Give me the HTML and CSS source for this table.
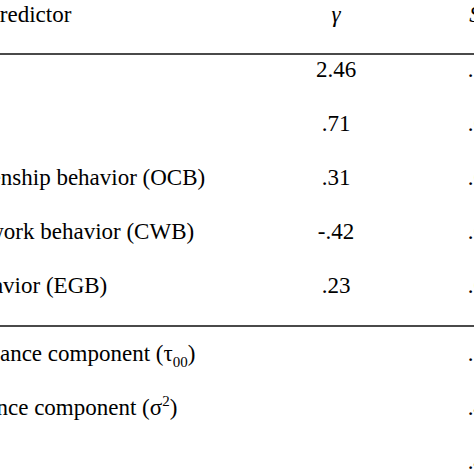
FILE: index.html
```html
<!DOCTYPE html>
<html lang="en">
<head>
	<meta charset="UTF-8">
	<meta name="viewport" content="width=device-width, initial-scale=1.0">
	<title>Multilevel model</title>
	<link rel="stylesheet" href="styles.css">
</head>
<body>
	<div class="wrap">
		<table class="tbl">
			<colgroup>
				<col class="col-name">
				<col class="col-num">
				<col class="col-se">
			</colgroup>
			<thead>
				<tr>
					<th class="cell-name"><span class="head-name">Predictor</span></th>
					<th class="cell-num"><i>γ</i></th>
					<th class="cell-se"><i>SE</i></th>
				</tr>
			</thead>
			<tbody class="fixed">
				<tr>
					<td class="cell-name">Intercept</td>
					<td class="cell-num">2.46</td>
					<td class="cell-se">.12</td>
				</tr>
				<tr>
					<td class="cell-name">Day</td>
					<td class="cell-num">.71</td>
					<td class="cell-se">.08</td>
				</tr>
				<tr>
					<td class="cell-name">Organizational citizenship behavior (OCB)</td>
					<td class="cell-num">.31</td>
					<td class="cell-se">.06</td>
				</tr>
				<tr>
					<td class="cell-name">Counterproductive work behavior (CWB)</td>
					<td class="cell-num">-.42</td>
					<td class="cell-se">.09</td>
				</tr>
				<tr class="last">
					<td class="cell-name">Everyday green behavior (EGB)</td>
					<td class="cell-num">.23</td>
					<td class="cell-se">.07</td>
				</tr>
			</tbody>
			<tbody class="random">
				<tr class="first">
					<td class="cell-name">Between-person variance component (τ<sub>00</sub>)</td>
					<td class="cell-num"></td>
					<td class="cell-se">.38</td>
				</tr>
				<tr>
					<td class="cell-name">Within-subject variance component (σ<sup>2</sup>)</td>
					<td class="cell-num"></td>
					<td class="cell-se">.41</td>
				</tr>
				<tr>
					<td class="cell-name">ICC</td>
					<td class="cell-num"></td>
					<td class="cell-se">.48</td>
				</tr>
			</tbody>
		</table>
	</div>
</body>
</html>
```

FILE: styles.css
```css
html, body{ margin: 0; padding: 0; overflow: hidden; background: #fff; }
body{ width: 474px; height: 474px; }
.wrap{ margin-left: -191px; }
.tbl{
	border-collapse: separate; border-spacing: 0; table-layout: fixed;
	width: 759px; font-family: "Liberation Serif", "Times New Roman", serif;
	font-size: 23px; color: #000;
}
.col-name{ width: 467px; }
.col-num{ width: 120px; }
.col-se{ width: 172px; }
.tbl th, .tbl td{
	padding: 0 0 25px; line-height: 29px; font-weight: normal; white-space: nowrap;
}
.tbl th{ padding-bottom: 24px; border-bottom: 2px solid #4a4a4a; }
.cell-name{ text-align: left; }
.cell-num, .cell-se{ text-align: center; }
.head-name{ margin-left: 178px; }
.fixed .last td{ border-bottom: 2px solid #4a4a4a; }
.random .first td{ padding-top: 12px; }
sub, sup{ line-height: 0; font-size: 15px; }
```
